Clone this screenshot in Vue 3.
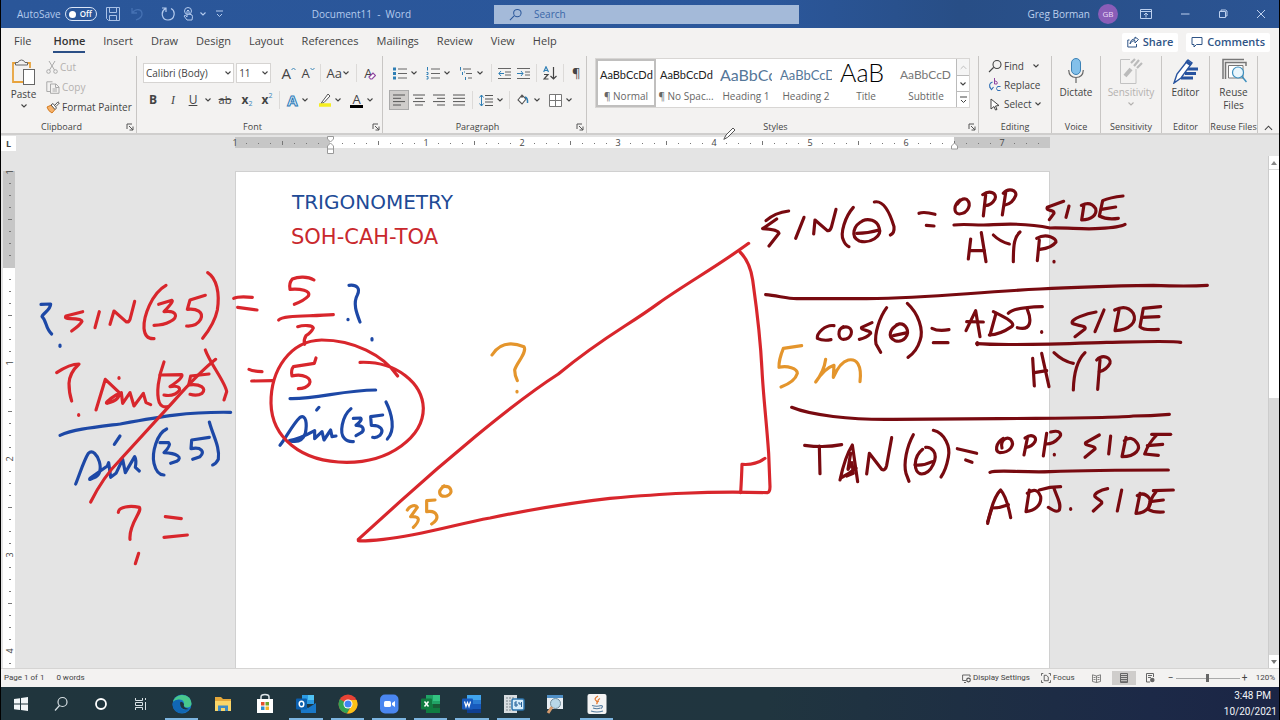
<script setup>
import { h, ref } from 'vue'

const Icon = (p) => h('svg', { width: p.w, height: p.h, class: 'icon', 'aria-hidden': 'true' }, [h('use', { href: '#' + p.n })])
Icon.props = ['n', 'w', 'h']

const tabs = ['File', 'Home', 'Insert', 'Draw', 'Design', 'Layout', 'References', 'Mailings', 'Review', 'View', 'Help']
const search = ref('')
const zoom = ref(50)

const styles = [
  { name: '¶ Normal', sample: 'AaBbCcDd', kind: 'body', on: true },
  { name: '¶ No Spac...', sample: 'AaBbCcDd', kind: 'body' },
  { name: 'Heading 1', sample: 'AaBbCc', kind: 'h1' },
  { name: 'Heading 2', sample: 'AaBbCcD', kind: 'h2' },
  { name: 'Title', sample: 'AaB', kind: 'title' },
  { name: 'Subtitle', sample: 'AaBbCcD', kind: 'sub' }
]

const ticks = (n, zero) => {
  const out = []
  for (let i = 1; i < n; i++) {
    const k = i - zero
    if (k % 8 === 0) { if (k) out.push({ p: i * 12, t: String(Math.abs(k / 8)) }) } else out.push({ p: i * 12, half: k % 4 === 0 })
  }
  return out
}
const hTicks = ticks(68, 8)
const vTicks = ticks(42, 8)

const tasks = [
  { n: 'win', l: 'Start' }, { n: 'tsearch', l: 'Search Windows' }, { n: 'cortana', l: 'Cortana' }, { n: 'taskview', l: 'Task View' },
  { n: 'edge', l: 'Edge', on: true }, { n: 'folder', l: 'File Explorer' }, { n: 'store', l: 'Store' },
  { n: 'outlook', l: 'Outlook', on: true }, { n: 'chrome', l: 'Chrome', on: true }, { n: 'zoomapp', l: 'Zoom', on: true },
  { n: 'excel', l: 'Excel', on: true }, { n: 'word', l: 'Word', on: true }, { n: 'calc', l: 'Calculator', on: true },
  { n: 'snip', l: 'Magnifier' }, { n: 'java', l: 'Java', on: true }
]

const red = '#d8262c', blue = '#1d48a6', dark = '#780a10', orange = '#e4952c'
/* Pen strokes, each layer in thirds of a pixel from its own origin. */
const ink = [
  { x: 20, y: 260, c: blue, d: [
    'M63 133L92 132C92 150 68 160 66 170C80 182 76 205 95 222', 'M120 255L120 259',
    'M568 486C580 530 600 560 595 598Q588 612 578 615',
    'M120 526C160 508 220 502 300 492C420 470 500 455 632 457',
    'M167 672C180 640 192 600 205 580C218 568 232 585 238 605C245 630 238 648 222 653Q205 662 210 655L262 618L266 608L272 652L288 640L308 598L316 638L344 590Q350 600 346 622L358 633',
    'M300 528L283 553',
    'M440 507C410 520 395 580 402 610Q410 645 432 645',
    'M420 548L446 548Q454 556 432 578C470 580 490 592 470 604L452 610',
    'M568 532L515 540L513 566C545 560 555 575 540 590L518 598'
  ] },
  { x: 20, y: 260, c: red, d: [
    'M188 155L138 168Q132 176 150 176Q186 176 186 184Q180 196 155 213', 'M238 155L225 203',
    'M270 193L282 153L318 185Q326 188 330 178L344 124',
    'M438 76C395 100 370 170 372 205Q375 238 402 236',
    'M416 133L456 121Q462 124 432 155C470 150 478 172 450 185Q430 196 402 196',
    'M556 106L510 120L502 148C530 145 552 155 542 178Q530 200 500 198',
    'M563 38C590 55 600 100 592 150C585 185 560 220 548 235',
    'M641 115Q655 108 697 112', 'M653 142L711 150',
    'M110 338C140 318 165 312 177 312C160 328 148 345 147 370Q147 400 155 423', 'M176 464L176 466',
    'M228 450L256 358L298 398Q300 420 262 430Q250 430 290 404L304 398L308 430L330 398L342 438L370 400L378 428L392 434',
    'M297 353L297 355',
    'M432 306C415 350 408 400 418 428Q426 444 441 440',
    'M420 345L485 344Q492 352 450 380C482 375 488 390 465 402Q450 409 432 405',
    'M567 342L512 348L506 375C540 370 562 385 546 400Q532 409 510 403',
    'M556 270C570 310 618 370 620 395L612 420',
    'M587 298C540 335 500 380 460 425L300 600C260 640 235 680 212 726',
    'M295 757C296 740 330 736 358 742C368 755 326 790 330 838', 'M356 880L346 911',
    'M436 770L484 776', 'M432 832L502 825'
  ] },
  { x: 250, y: 170, c: blue, d: [
    'M297 346C320 343 332 355 322 375C308 400 320 430 330 456', 'M294 448L294 449', 'M366 506L366 510',
    'M120 686C200 688 280 660 377 660',
    'M90 826C110 800 130 760 150 742C168 732 172 760 166 790Q155 822 118 812Q150 806 194 782L194 806L216 785L222 810L242 780L246 800L258 798',
    'M207 712L200 720', 'M303 716C275 740 268 790 283 805Q292 816 310 815',
    'M310 745L332 744Q338 750 318 766C342 765 346 782 330 790L318 797',
    'M398 735L362 740L364 766C395 765 402 782 390 796Q378 805 368 802', 'M408 696C425 730 438 780 412 807'
  ] },
  { x: 250, y: 170, c: red, d: [
    'M192 330C170 316 140 322 127 327Q116 340 120 358C150 355 184 362 175 378Q162 392 133 403',
    'M86 450C100 434 180 440 250 434',
    'M143 470C160 465 188 465 190 474Q184 488 168 497Q160 510 164 523',
    'M-3 598Q10 604 36 605', 'M5 633L68 632',
    'M443 618C400 555 310 510 215 510C120 512 62 600 63 700C65 800 150 877 290 877C420 877 520 800 520 715C518 640 440 573 330 577',
    'M198 564L193 580L130 590Q122 600 126 618C160 610 188 625 178 642Q168 656 145 656',
    'M1496 220C1400 290 1310 340 1225 400C1130 470 1060 500 925 612C780 705 560 895 450 995L325 1108',
    'M325 1112Q340 1114 400 1108C520 1095 620 1062 720 1044C870 1013 990 995 1080 985C1230 972 1360 963 1552 968Q1560 966 1560 950L1556 850C1550 760 1540 680 1536 600C1530 480 1515 380 1508 330Q1500 275 1470 246',
    'M1545 865C1525 880 1500 885 1476 883Q1475 920 1472 968'
  ] },
  { x: 250, y: 170, c: orange, d: [
    'M472 1020C480 1006 498 1003 502 1012L482 1040C510 1038 512 1050 490 1072',
    'M555 990L530 992L530 1025C562 1020 572 1045 545 1062',
    'M582 948C560 965 568 982 590 978C612 970 605 945 578 950',
    'M726 555C745 525 775 512 822 530C832 548 800 578 794 600Q794 615 802 632', 'M801 664L801 666'
  ] },
  { x: 700, y: 340, c: orange, d: [
    'M305 17L250 25C242 45 236 65 237 82C262 76 292 85 292 100Q285 125 243 141',
    'M377 58Q372 95 347 126Q375 84 402 76L400 112Q420 66 445 60C470 55 486 75 480 125'
  ] },
  { x: 700, y: 170, c: dark, d: [
    'M266 123Q225 128 198 152', 'M230 147L188 176Q234 178 237 190L207 228', 'M312 142L287 205',
    'M341 192L345 150L382 182Q390 184 394 172L408 118', 'M460 112C435 140 420 190 430 210Q436 226 447 230',
    'M490 152C460 165 450 200 478 213C510 222 548 200 537 172C530 150 505 145 488 152', 'M470 190Q505 190 537 180',
    'M523 96C550 90 570 130 582 170Q584 190 571 195', 'M657 130Q672 124 705 133', 'M679 166L702 168',
    'M197 374C230 376 260 386 290 386L500 386C700 384 800 368 1020 357C1140 350 1220 348 1360 346Q1460 350 1522 346',
    'M402 467C375 463 350 490 352 505Q370 514 393 509', 'M430 470C410 480 415 508 430 508C455 508 462 480 445 472Q436 468 426 474',
    'M516 458L485 472C480 482 514 480 512 490Q500 504 478 508', 'M560 413C540 440 522 490 528 522L542 547',
    'M597 462C570 475 560 500 585 512C610 520 630 495 620 475C612 460 600 460 590 464', 'M580 497L622 488',
    'M622 400C655 430 672 480 660 512Q650 545 624 562', 'M696 475Q715 485 747 479', 'M700 518L744 518'
  ] },
  { x: 940, y: 170, c: dark, d: [
    'M60 90C40 105 40 130 58 132C85 130 96 102 80 88Q66 82 52 102', 'M137 75L130 138', 'M128 74C150 58 172 70 165 87Q155 106 135 107',
    'M197 68L187 135', 'M190 70C205 52 232 60 227 77Q217 102 195 105',
    'M371 94L322 112C316 124 344 118 342 130L328 149', 'M387 108L378 142',
    'M432 104L425 150C455 148 472 135 467 116Q452 92 424 106', 'M549 78Q510 82 488 92L478 138Q500 150 535 145', 'M484 118L527 111',
    'M42 165C80 160 110 168 160 164C230 160 290 165 330 174C380 172 440 180 480 175Q540 172 555 163',
    'M92 207L85 267', 'M124 188L138 275', 'M90 242L133 242', 'M160 195Q180 215 208 222', 'M240 186C224 200 220 220 220 275',
    'M298 210L292 272', 'M290 205C320 188 350 205 348 216Q335 234 300 238', 'M342 274L342 276',
    'M78 482L107 422L120 500', 'M80 455L130 456', 'M168 430L150 495', 'M160 425C190 440 230 458 215 470Q180 494 148 495',
    'M205 430Q220 412 307 410', 'M262 418C275 450 275 484 232 473', 'M305 485L305 487',
    'M468 426C440 430 390 448 397 460C408 468 440 465 435 477L405 500', 'M492 420L465 485',
    'M538 415L525 482C570 480 592 455 580 430Q560 402 524 420', 'M662 410L610 415L600 470Q610 482 655 478', 'M606 442L657 440',
    'M112 518L112 524', 'M110 521C200 528 400 520 500 517C600 515 700 512 722 517',
    'M278 565L283 648', 'M305 550L327 650', 'M283 608L320 602', 'M342 548Q370 575 400 580', 'M435 548Q402 580 400 660',
    'M480 570L473 658', 'M470 570C490 550 515 565 510 580Q500 600 478 605'
  ] },
  { x: 700, y: 340, c: dark, d: [
    'M275 202C330 225 450 240 580 238L900 236C1100 234 1250 234 1300 228Q1350 228 1408 223',
    'M314 316Q375 324 425 314', 'M358 318L360 401', 'M420 420Q435 350 457 315L473 425', 'M422 414Q450 400 468 384', 'M452 340L444 388L456 368L460 400L440 408',
    'M500 402L508 340L545 388Q556 394 560 376L575 293', 'M640 284C620 320 610 370 618 400L627 424',
    'M668 328C640 350 638 398 665 402C695 400 715 352 700 332Q690 320 677 322', 'M645 375Q670 378 697 365',
    'M700 271C735 280 752 320 745 352Q738 390 723 411', 'M772 326L830 340', 'M797 360L816 367'
  ] },
  { x: 940, y: 380, c: dark, d: [
    'M190 175C165 190 165 215 180 218C210 218 226 195 212 178C200 168 180 182 186 204', 'M262 175L252 225', 'M255 174C275 160 292 170 285 185Q276 200 258 202',
    'M320 160L310 228', 'M332 156C362 148 368 163 355 175Q342 192 318 192', 'M343 223L343 225',
    'M478 165L437 188C430 198 468 196 465 207L435 232', 'M512 168L506 222', 'M558 172L546 230C590 230 602 205 592 190Q575 165 553 182',
    'M692 163L635 163', 'M650 165Q625 190 614 222L655 226', 'M622 197L668 193',
    'M150 277C170 268 240 278 330 275C450 270 600 270 685 270',
    'M143 430Q160 350 182 330Q200 350 212 413', 'M143 425L156 384Q180 384 205 374',
    'M268 330L258 395C285 392 305 375 302 350Q290 318 262 340', 'M298 330Q330 320 362 320', 'M342 325C350 350 365 370 358 390Q350 400 325 382', 'M392 386L392 388',
    'M503 326C480 330 460 342 465 350C475 360 488 362 485 370L460 393', 'M545 330L532 393',
    'M600 340L588 400C625 398 638 370 628 355Q612 334 592 347', 'M700 330L640 332', 'M648 335Q628 360 625 388Q640 398 670 396', 'M630 365L670 360'
  ] }
]
</script>

<template>
  <div class="screen">
    <svg class="defs" aria-hidden="true">
      <symbol id="caret" viewBox="0 0 8 6"><path d="M1.5 1.5L4 4L6.500 1.500" fill="none" stroke="currentColor" stroke-width="1.100" /></symbol>
      <symbol id="tri-up" viewBox="0 0 6 4"><path d="M0 4L3 0L6 4Z" fill="#888" /></symbol>
      <symbol id="tri-down" viewBox="0 0 6 4"><path d="M0 0H6L3 4Z" fill="#777" /></symbol>
      <symbol id="save" viewBox="0 0 14 14"><g fill="none" stroke="#a9c1e6"><path d="M.5.5H13.500V13.500H2.500L.5 11.500Z" /><path d="M3.500.5V5.500H10.500V.5M3.500 13V8.500H10.500V13" /></g></symbol>
      <symbol id="undo" viewBox="0 0 15 14"><path d="M2 1V6H7M2 6C6 1 12 2 12 7C12 10 9 12 6 13" fill="none" stroke="#4571b3" stroke-width="1.300" /></symbol>
      <symbol id="redo" viewBox="0 0 14 14"><path d="M1 1H5V5M4.500 1.500C-1 5 1 13 7 13C14 13 15 4 10 1.500" fill="none" stroke="#b4cbee" stroke-width="1.200" /></symbol>
      <symbol id="touch" viewBox="0 0 14 14"><g fill="none" stroke="#b4cbee"><circle cx="6" cy="4" r="3.500" /><path d="M5 10V4Q6 2 7 4V7L10 8Q11 9 10 13H5L2 9Q3 7 5 10" /></g></symbol>
      <symbol id="bar-caret" viewBox="0 0 9 8"><path d="M1 1H8M2 4L4.500 6.500L7 4" fill="none" stroke="currentColor" /></symbol>
      <symbol id="mag" viewBox="0 0 14 14"><path d="M1 13L5.500 8.500M5 5.500A4 4 0 1 0 13 5.500A4 4 0 1 0 5 5.500" fill="none" stroke="currentColor" stroke-width="1.100" /></symbol>
      <symbol id="ribbonbox" viewBox="0 0 12 10"><path d="M.5.5H11.500V9.500H.5ZM.5 2.500H11.500M6 8.500V4M4 6L6 4L8 6" fill="none" stroke="currentColor" /></symbol>
      <symbol id="min" viewBox="0 0 10 10"><path d="M1 5H9.500" stroke="currentColor" /></symbol>
      <symbol id="restore" viewBox="0 0 10 10"><path d="M1.500 2.500H7.500V8.500H1.500ZM3 2V1Q9 .5 9 2V7H8" fill="none" stroke="currentColor" /></symbol>
      <symbol id="close" viewBox="0 0 10 10"><path d="M1 1L9 9M9 1L1 9" stroke="currentColor" /></symbol>
      <symbol id="share" viewBox="0 0 12 12"><path d="M2.500 4H.8V11H9.500V8M3 8Q4 4.500 8 4.500V7L11.500 3.500L8 1V3Q3.500 3 3 8" fill="none" stroke="currentColor" /></symbol>
      <symbol id="comment" viewBox="0 0 12 12"><path d="M1 1.500H11V8.500H5.500L3 11V8.500H1Z" fill="none" stroke="currentColor" /></symbol>
      <symbol id="paste" viewBox="0 0 25 27"><path d="M6 4H2V23H12M16 4H19V9" fill="none" stroke="#e8a33c" stroke-width="1.800" /><path d="M4.500 6V3.500H7Q8 1 10.500 1Q13 1 14 3.500H16.500V6Z" fill="#f3f2f1" stroke="#666" /><rect x="12.500" y="10.500" width="11" height="15" fill="#fff" stroke="#666" /></symbol>
      <symbol id="cut" viewBox="0 0 12 14"><g fill="none" stroke="#aaa"><path d="M3 1L8.500 10M9 1L3.500 10" /><circle cx="2.500" cy="11.500" r="1.800" /><circle cx="9.500" cy="11.500" r="1.800" /></g></symbol>
      <symbol id="copy" viewBox="0 0 14 13"><path d="M4 10.500H.8V.8H6.500M4.500 3H10L13 6V12.300H4.500ZM9.500 3V6.500H13M6.500 8H11M6.500 10H11" fill="none" stroke="#aaa" /></symbol>
      <symbol id="painter" viewBox="0 0 14 13"><path d="M1 6L5.500 4L9 8.500L6 12Q2 10 1 6Z" fill="#f6b26b" stroke="#d47b20" /><path d="M5 4L7 2.500L10.500 7L9 8.500ZM9 4L12 .8L13.300 2L10 5.500" fill="#fff" stroke="#555" /></symbol>
      <symbol id="launch" viewBox="0 0 8 8"><path d="M1 6V1H6M3 3L7 7M7 3.500V7H3.500" fill="none" stroke="#555" /></symbol>
      <symbol id="up" viewBox="0 0 5 4"><path d="M.5 3L2.500 1L4.500 3" fill="none" stroke="#3a86b8" /></symbol>
      <symbol id="down" viewBox="0 0 5 4"><path d="M.5 1L2.500 3L4.500 1" fill="none" stroke="#3a86b8" /></symbol>
      <symbol id="eraser" viewBox="0 0 8 8"><path d="M1 5L5 1L7.500 3.500L4 7H2.500Z" fill="#fff" stroke="#8e44a0" stroke-width="1.200" /></symbol>
      <symbol id="pen" viewBox="0 0 12 14"><path d="M3 9L9 1L11 3L5 9.500L2 10.500Z" fill="#fff" stroke="#555" /><path d="M0 12H12" stroke="#f5ee20" stroke-width="3.500" /></symbol>
      <symbol id="bullets" viewBox="0 0 14 13"><path d="M5 2H14M5 6.500H14M5 11H14" stroke="#666" /><path d="M0 2H3M0 6.500H3M0 11H3" stroke="#2f7fb5" stroke-width="3" /></symbol>
      <symbol id="numbers" viewBox="0 0 14 13"><path d="M5 2H14M5 6.500H14M5 11H14" stroke="#666" /><path d="M1.500 0V3.500M.5 5.500H2V7.500H.5M.5 9.500H2V12H.5" fill="none" stroke="#2f7fb5" /></symbol>
      <symbol id="levels" viewBox="0 0 14 13"><path d="M4 2H12M7 6.500H13M9 11H13" stroke="#666" /><path d="M1.500 0V3.500M3.500 5V8M5 5H6M6.500 10V13" fill="none" stroke="#2f7fb5" /></symbol>
      <symbol id="outdent" viewBox="0 0 13 11"><path d="M0 .5H13M7 4H13M7 7H13M0 10.500H13" stroke="#666" /><path d="M6 5.500H1M3 3L.8 5.500L3 8" fill="none" stroke="#2f7fb5" /></symbol>
      <symbol id="indent" viewBox="0 0 13 11"><path d="M0 .5H13M8 4H13M8 7H13M0 10.500H13" stroke="#666" /><path d="M0 5.500H6M4 3L6 5.500L4 8" fill="none" stroke="#2f7fb5" /></symbol>
      <symbol id="sortaz" viewBox="0 0 14 14"><path d="M.7 6L3 0.800L5.500 6M1.500 4.500H4.700" fill="none" stroke="#2f7fb5" stroke-width="1.200" /><path d="M1 8.500H5L1 13H5.500M10.500 1V13M7.500 10L10.500 13L13.500 10" fill="none" stroke="#444" stroke-width="1.200" /></symbol>
      <symbol id="alignl" viewBox="0 0 12 12"><path d="M0 1H12M0 4.300H8M0 7.600H12M0 11H8" stroke="#555" /></symbol>
      <symbol id="alignc" viewBox="0 0 12 12"><path d="M0 1H12M2 4.300H10M0 7.600H12M2 11H10" stroke="#555" /></symbol>
      <symbol id="alignr" viewBox="0 0 12 12"><path d="M0 1H12M4 4.300H12M0 7.600H12M4 11H12" stroke="#555" /></symbol>
      <symbol id="alignj" viewBox="0 0 12 12"><path d="M0 1H12M0 4.300H12M0 7.600H12M0 11H12" stroke="#555" /></symbol>
      <symbol id="spacing" viewBox="0 0 14 13"><path d="M6 1.500H14M6 5H14M6 8H14M6 11.500H14" stroke="#555" /><path d="M2.500 1V12M.5 3.500L2.500 1L4.500 3.500M.5 9.500L2.500 12L4.500 9.500" fill="none" stroke="#2f7fb5" /></symbol>
      <symbol id="bucket" viewBox="0 0 13 12"><path d="M5 1L1 6L5 10L9 5ZM5 1V4" fill="#fff" stroke="#555" stroke-width="1.100" /><path d="M8 3Q11 4 10.500 9" fill="none" stroke="#2f7fb5" stroke-width="1.500" /></symbol>
      <symbol id="borders" viewBox="0 0 13 13"><path d="M.5.5H12.500V12.500H.5ZM6.500 0V13M0 6.500H13" fill="#fff" stroke="#777" /></symbol>
      <symbol id="replace" viewBox="0 0 13 14"><path d="M2.500 11Q-1 6 4 4M1 9L3 11.500L5 9" fill="none" stroke="#2f6eb5" stroke-width="1.100" /><path d="M6 0V6H8.500Q9.500 3 6 3" fill="none" stroke="#8e44a0" /><path d="M12 8.500Q8 7.500 8 10.500Q8 13.500 12 12.500" fill="none" stroke="#2f6eb5" /></symbol>
      <symbol id="arrow" viewBox="0 0 10 13"><path d="M1 1V11L4 8.500L5.500 12L7 11.500L5.500 8L9 7.500Z" fill="#fff" stroke="#444" /></symbol>
      <symbol id="mic" viewBox="0 0 16 26"><rect x="3.500" y=".5" width="9" height="16" rx="4.500" fill="#83c0ea" stroke="#3c82b6" /><path d="M.7 12Q1 19.500 8 19.500Q15 19.500 15.300 12M8 19.500V25" fill="none" stroke="#666" stroke-width="1.200" /></symbol>
      <symbol id="sens" viewBox="0 0 25 26"><path d="M17 11V25.500H1.500V1.500H11" fill="none" stroke="#c2c2c2" /><path d="M6 18L12 11" stroke="#bbb" stroke-width="4" /><path d="M12 5L16 1M15 8L20 2M18 10L23 5" stroke="#bbb" stroke-width="2.200" /></symbol>
      <symbol id="editor" viewBox="0 0 26 26"><path d="M13 11H25M12 15.500H23M8 20H20" stroke="#27539f" stroke-width="2.800" /><path d="M1 25L4 16L15 2L19 5L8 20Z" fill="#fff" stroke="#27539f" stroke-width="1.400" /><path d="M14 2L19 5.500L17 8L12 4.500Z" fill="#27539f" /></symbol>
      <symbol id="reuse" viewBox="0 0 26 26"><path d="M2 21V1.500H23M4.500 21V4.500H25V8" fill="none" stroke="#777" stroke-width="1.500" /><path d="M7.500 7.500H22V20H7.500Z" fill="#fff" stroke="#777" /><circle cx="17" cy="14.500" r="5.500" fill="#eaf6fc" stroke="#3c8fbe" stroke-width="1.200" /><path d="M21 18.500L25.500 24" stroke="#3c8fbe" stroke-width="1.500" /></symbol>
      <symbol id="collapse" viewBox="0 0 10 6"><path d="M1 5L5 1L9 5" fill="none" stroke="#444" stroke-width="1.200" /></symbol>
      <symbol id="display" viewBox="0 0 9 9"><path d="M8 3V1H.6V6.500H4M2 8.500H4" fill="none" stroke="#666" /><circle cx="6.500" cy="6" r="1.800" fill="none" stroke="#555" stroke-width="1.200" /></symbol>
      <symbol id="focus" viewBox="0 0 11 11"><path d="M.5 3V.5H2.500M8.500.5H10.500V3M.5 8V10.500H2.500M8.500 10.500H10.500V8M3.500 2.500H6L8 4.500V8.500H3.500Z" fill="none" stroke="#555" /></symbol>
      <symbol id="read" viewBox="0 0 9 9"><path d="M.5.800L4.500 2L8.500.800V7.500L4.500 8.500L.5 7.500ZM4.500 2V8.500M1.500 3.500H3.500M5.500 3.500H7.500M1.500 5.500H3.500M5.500 5.500H7.500" fill="none" stroke="#666" stroke-width=".8" /></symbol>
      <symbol id="print" viewBox="0 0 8 10"><path d="M.5.5H7.500V9.500H.5ZM1 2.500H7M1 4.500H7M1 6.500H7M1 8.300H7" fill="none" stroke="#666" /></symbol>
      <symbol id="web" viewBox="0 0 9 10"><path d="M7.500 4V.5H.5V9H4M2 2.500H6M2 4.500H5" fill="none" stroke="#666" /><circle cx="6.300" cy="7" r="2.300" fill="#666" /></symbol>
      <symbol id="win" viewBox="0 0 22 22"><path d="M4 6L10 5.200V10.500H4ZM11 5L18 4V10.500H11ZM4 11.500H10V17L4 16.200ZM11 11.500H18V18L11 17Z" fill="#f2f6f8" /></symbol>
      <symbol id="tsearch" viewBox="0 0 22 22"><circle cx="12.500" cy="9" r="4.500" fill="none" stroke="#d8e0e4" stroke-width="1.200" /><path d="M9.500 12.500L5 17.500" stroke="#d8e0e4" stroke-width="1.200" /></symbol>
      <symbol id="cortana" viewBox="0 0 22 22"><circle cx="11" cy="11" r="5" fill="none" stroke="#fff" stroke-width="1.800" /></symbol>
      <symbol id="taskview" viewBox="0 0 22 22"><path d="M5.500 5V7.500H12.500V5M5.500 17V14.500H12.500V17M5.500 9.500H12.500V12.500H5.500ZM15.500 5V7M15.500 9V17" fill="none" stroke="#d8e0e4" /></symbol>
      <symbol id="edge" viewBox="0 0 22 22"><circle cx="11" cy="11" r="9.500" fill="#1674c9" /><path d="M2 9C4 0 20-1 20.500 11C20 16 12 15 13 12C14 6 7 5 2 9Z" fill="#48c78d" /><path d="M2 9C7 5 11 7 9 11C8 16 13 18 18 16C14 22 3 22 1.500 12Z" fill="#1167b4" /><path d="M9 10Q10 7 13 11Q12 14 15 15L18 16Q9 18 9 10Z" fill="#20353d" /></symbol>
      <symbol id="folder" viewBox="0 0 22 22"><path d="M3 4H9L11 6H19V18H3Z" fill="#e5a83b" /><path d="M3 8H19V18H3Z" fill="#fad568" /><path d="M6 18V12.500H16V18H13V15H9V18Z" fill="#3e8bc4" /></symbol>
      <symbol id="store" viewBox="0 0 22 22"><path d="M7 7V4Q7 1.500 11 1.500Q15 1.500 15 4V7" fill="none" stroke="#dfe6ea" stroke-width="1.500" /><path d="M3 6H19V20H3Z" fill="#fff" /><path d="M7 9H10.500V12.500H7Z" fill="#e34f2e" /><path d="M11.500 9H15V12.500H11.500Z" fill="#6ea72d" /><path d="M7 13.500H10.500V17H7Z" fill="#2c8ed0" /><path d="M11.500 13.500H15V17H11.500Z" fill="#f2b52b" /></symbol>
      <symbol id="outlook" viewBox="0 0 22 22"><path d="M7 2H19V11H7Z" fill="#2c9be3" /><path d="M13 2H19V7H13Z" fill="#50c3f4" /><path d="M5 10L13 15L21 10V20H6Z" fill="#1978c8" /><rect x="1" y="5.500" width="11" height="11" rx="1" fill="#0b5fae" /><ellipse cx="6.500" cy="11" rx="2.300" ry="2.800" fill="none" stroke="#fff" stroke-width="1.500" /></symbol>
      <symbol id="chrome" viewBox="0 0 22 22"><circle cx="11" cy="11" r="9.500" fill="#e94335" /><path d="M11 11L2.800 6.200A9.500 9.500 0 0 0 10 20.400L14 13Z" fill="#33a353" /><path d="M11 7H19.600A9.500 9.500 0 0 1 10 20.500L15 12Z" fill="#fbc116" /><circle cx="11" cy="11" r="4.500" fill="#fff" /><circle cx="11" cy="11" r="3.500" fill="#4285f4" /></symbol>
      <symbol id="zoomapp" viewBox="0 0 22 22"><rect x="2" y="1.500" width="18.500" height="19" rx="5" fill="#4a86f0" /><rect x="6" y="8" width="7" height="6" rx="1.500" fill="#fff" /><path d="M14 10L17 8V14L14 12Z" fill="#fff" /></symbol>
      <symbol id="excel" viewBox="0 0 22 22"><path d="M6 2H20V20H6Z" fill="#21a366" /><path d="M13 2H20V8H13Z" fill="#33c481" /><path d="M6 11H20V20H6Z" fill="#107c41" /><path d="M13 11H20V15H13Z" fill="#185c37" /><rect x="1" y="5.500" width="11" height="11" rx="1" fill="#107c41" /><path d="M4.500 8.500L8.500 13.500M8.500 8.500L4.500 13.500" stroke="#fff" stroke-width="1.500" /></symbol>
      <symbol id="word" viewBox="0 0 22 22"><path d="M6 2H20V20H6Z" fill="#2b7cd3" /><path d="M6 2H20V7H6Z" fill="#41a5ee" /><path d="M6 11H20V20H6Z" fill="#185abd" /><path d="M6 16H20V20H6Z" fill="#103f91" /><rect x="1" y="5.500" width="11" height="11" rx="1" fill="#185abd" /><path d="M3.500 8.500L5 13.500L6.500 9.500L8 13.500L9.500 8.500" fill="none" stroke="#fff" stroke-width="1.200" /></symbol>
      <symbol id="calc" viewBox="0 0 22 22"><rect x="1" y="2" width="13" height="18" fill="#d8dde0" /><path d="M3 5H12M3 8H12M3 11H12M3 14H12M3 17H12" stroke="#7a858b" stroke-dasharray="2 1" /><rect x="9" y="6" width="12" height="11" rx="1.500" fill="#d8edfa" stroke="#2e76ae" stroke-width="1.500" /><path d="M14 9H12V13H14V11H12M16 9V11H19M18.500 9V14" fill="none" stroke="#225e96" /></symbol>
      <symbol id="snip" viewBox="0 0 22 22"><rect x="3" y="2" width="16" height="14" fill="#e7eef3" /><path d="M3 2H19V5H3Z" fill="#4f8fc5" /><circle cx="11.500" cy="10.500" r="5" fill="#b8d8e8" stroke="#738d9b" /><path d="M8 14L4 20" stroke="#d59b6e" stroke-width="3" /></symbol>
      <symbol id="java" viewBox="0 0 22 22"><rect x="1.500" y="1" width="19" height="20" rx="2" fill="#f4f4f4" /><path d="M12 3Q7 6 10.500 8Q12 9.500 10.500 11M14 5.500Q11 7 12.500 9" fill="none" stroke="#e2762b" stroke-width="1.200" /><path d="M6 12.500Q11 14 15 12.500M7 15Q11 16.500 14.500 15M5 18Q11 20 17 18M15 12.500Q18 13 15 15.500" fill="none" stroke="#527a9e" stroke-width="1.100" /></symbol>
    </svg>

    <header class="titlebar">
      <div class="quick">
        <label class="autosave">AutoSave <span class="switch"><input type="checkbox" role="switch" aria-label="AutoSave"><i></i>Off</span></label>
        <button aria-label="Save"><Icon n="save" w="14" h="14" /></button>
        <button class="undo" aria-label="Undo"><Icon n="undo" w="15" h="14" /></button>
        <button aria-label="Redo"><Icon n="redo" w="14" h="14" /></button>
        <button class="touch" aria-label="Touch mode"><Icon n="touch" w="14" h="14" /><Icon n="caret" w="8" h="6" /></button>
        <button aria-label="Customize toolbar"><Icon n="bar-caret" w="9" h="8" /></button>
        <span class="doc">Document11&nbsp; -&nbsp; Word</span>
      </div>
      <label class="search"><Icon n="mag" w="13" h="13" /><input v-model="search" type="text" placeholder="Search" aria-label="Search"></label>
      <div class="winctl">
        <span class="user">Greg Borman</span><span class="avatar">GB</span>
        <button aria-label="Ribbon display options"><Icon n="ribbonbox" w="12" h="10" /></button>
        <button aria-label="Minimize"><Icon n="min" w="10" h="10" /></button>
        <button aria-label="Restore"><Icon n="restore" w="10" h="10" /></button>
        <button aria-label="Close"><Icon n="close" w="10" h="10" /></button>
      </div>
    </header>

    <div class="tabrow">
      <nav class="tabs"><a v-for="t in tabs" :key="t" href="#" :class="{ on: t === 'Home' }">{{ t }}</a></nav>
      <button class="pill"><Icon n="share" w="12" h="12" />Share</button>
      <button class="pill"><Icon n="comment" w="12" h="12" />Comments</button>
    </div>

    <div class="ribbon">
      <section class="group">
        <div class="body clip">
          <button class="big"><Icon n="paste" w="25" h="27" /><span>Paste</span><Icon n="caret" w="8" h="6" /></button>
          <div class="list">
            <button class="off"><Icon n="cut" w="12" h="14" />Cut</button>
            <button class="off"><Icon n="copy" w="14" h="13" />Copy</button>
            <button><Icon n="painter" w="14" h="13" />Format Painter</button>
          </div>
        </div>
        <footer class="more">Clipboard<button class="launch" aria-label="Clipboard settings"><Icon n="launch" w="8" h="8" /></button></footer>
      </section>

      <section class="group">
        <div class="body rows">
          <div class="row">
            <span class="combo family"><select aria-label="Font"><option>Calibri (Body)</option></select><Icon n="caret" w="8" h="6" /></span>
            <span class="combo size"><select aria-label="Font size"><option>11</option></select><Icon n="caret" w="8" h="6" /></span>
            <button class="b20 lg" aria-label="Grow font">A<Icon n="up" w="5" h="4" /></button>
            <button class="b20 md" aria-label="Shrink font">A<Icon n="down" w="5" h="4" /></button>
            <i class="sep"></i>
            <button class="b33 md">Aa<Icon n="caret" w="8" h="6" /></button>
            <i class="sep"></i>
            <button class="b24 md clear" aria-label="Clear formatting">A<Icon n="eraser" w="8" h="8" /></button>
          </div>
          <div class="row">
            <button class="b20"><b>B</b></button>
            <button class="b20 serif"><em>I</em></button>
            <button class="b20"><u>U</u></button>
            <button class="b10" aria-label="Underline style"><Icon n="caret" w="8" h="6" /></button>
            <button class="b24"><s>ab</s></button>
            <button class="b20"><b>x</b><sub>2</sub></button>
            <button class="b20"><b>x</b><sup>2</sup></button>
            <i class="sep"></i>
            <button class="b33 fx"><b>A</b><Icon n="caret" w="8" h="6" /></button>
            <button class="b33" aria-label="Highlight"><Icon n="pen" w="12" h="14" /><Icon n="caret" w="8" h="6" /></button>
            <button class="b33 fc"><span>A</span><Icon n="caret" w="8" h="6" /></button>
          </div>
        </div>
        <footer class="more">Font<button class="launch" aria-label="Font settings"><Icon n="launch" w="8" h="8" /></button></footer>
      </section>

      <section class="group">
        <div class="body rows para">
          <div class="row">
            <button class="b34" aria-label="Bullets"><Icon n="bullets" w="14" h="13" /><Icon n="caret" w="8" h="6" /></button>
            <button class="b34" aria-label="Numbering"><Icon n="numbers" w="14" h="13" /><Icon n="caret" w="8" h="6" /></button>
            <button class="b34" aria-label="Multilevel list"><Icon n="levels" w="14" h="13" /><Icon n="caret" w="8" h="6" /></button>
            <i class="sep"></i>
            <button class="b20" aria-label="Decrease indent"><Icon n="outdent" w="13" h="11" /></button>
            <button class="b20" aria-label="Increase indent"><Icon n="indent" w="13" h="11" /></button>
            <i class="sep"></i>
            <button class="b20" aria-label="Sort"><Icon n="sortaz" w="14" h="14" /></button>
            <i class="sep"></i>
            <button class="b20 md">¶</button>
          </div>
          <div class="row">
            <button class="b20 sel" aria-label="Align left"><Icon n="alignl" w="12" h="12" /></button>
            <button class="b20" aria-label="Center"><Icon n="alignc" w="12" h="12" /></button>
            <button class="b20" aria-label="Align right"><Icon n="alignr" w="12" h="12" /></button>
            <button class="b20" aria-label="Justify"><Icon n="alignj" w="12" h="12" /></button>
            <i class="sep"></i>
            <button class="b30" aria-label="Line spacing"><Icon n="spacing" w="14" h="13" /><Icon n="caret" w="8" h="6" /></button>
            <i class="sep"></i>
            <button class="b33" aria-label="Shading"><Icon n="bucket" w="13" h="12" /><Icon n="caret" w="8" h="6" /></button>
            <button class="b33" aria-label="Borders"><Icon n="borders" w="13" h="13" /><Icon n="caret" w="8" h="6" /></button>
          </div>
        </div>
        <footer class="more">Paragraph<button class="launch" aria-label="Paragraph settings"><Icon n="launch" w="8" h="8" /></button></footer>
      </section>

      <section class="group">
        <div class="body gallery">
          <button v-for="s in styles" :key="s.name" class="style" :class="[s.kind, { on: s.on }]"><span class="sample">{{ s.sample }}</span><span>{{ s.name }}</span></button>
          <div class="scroll">
            <button class="dim" aria-label="Previous styles"><Icon n="collapse" w="7" h="5" /></button>
            <button aria-label="Next styles"><Icon n="caret" w="8" h="6" /></button>
            <button aria-label="More styles"><Icon n="bar-caret" w="9" h="8" /></button>
          </div>
        </div>
        <footer class="more">Styles<button class="launch" aria-label="Styles pane"><Icon n="launch" w="8" h="8" /></button></footer>
      </section>

      <section class="group">
        <div class="body list edit">
          <button><Icon n="mag" w="14" h="14" />Find<Icon class="gap" n="caret" w="8" h="6" /></button>
          <button><Icon n="replace" w="14" h="14" />Replace</button>
          <button><Icon n="arrow" w="14" h="13" />Select<Icon n="caret" w="8" h="6" /></button>
        </div>
        <footer>Editing</footer>
      </section>
      <section class="group"><div class="body"><button class="big"><Icon n="mic" w="16" h="26" /><span>Dictate</span></button></div><footer>Voice</footer></section>
      <section class="group"><div class="body"><button class="big off"><Icon n="sens" w="25" h="26" /><span>Sensitivity</span><Icon n="caret" w="8" h="6" /></button></div><footer>Sensitivity</footer></section>
      <section class="group"><div class="body"><button class="big"><Icon n="editor" w="26" h="26" /><span>Editor</span></button></div><footer>Editor</footer></section>
      <section class="group"><div class="body"><button class="big"><Icon n="reuse" w="26" h="26" /><span>Reuse<br>Files</span></button></div><footer>Reuse Files</footer></section>
      <button class="collapse" aria-label="Collapse ribbon"><Icon n="collapse" w="9" h="6" /></button>
    </div>

    <div class="rulerrow">
      <span class="corner">L</span>
      <svg class="hruler" width="815" height="18" aria-label="Horizontal ruler">
        <rect y="1" width="815" height="11" fill="#c6c6c6" /><rect x="95" y="1" width="624" height="11" fill="#fff" />
        <template v-for="t in hTicks" :key="t.p">
          <text v-if="t.t" :x="t.p - 1" y="10">{{ t.t }}</text>
          <rect v-else :x="t.p - 1" :y="t.half ? 5 : 7" width="1" :height="t.half ? 4 : 1" fill="#777" />
        </template>
        <text x="0" y="10">1</text>
        <path d="M92.500.5H98.500V3L95.500 6L92.500 3ZM92.500 13V10L95.500 7L98.500 10V17.500H92.500ZM92.500 13H98.500M716.500 13V10L719.500 7L722.500 10V13Z" fill="#fff" stroke="#999" />
      </svg>
    </div>

    <main class="work">
      <svg class="vruler" width="15" height="497" aria-label="Vertical ruler">
        <rect x="2" width="12" height="97" fill="#c6c6c6" /><rect x="2" y="97" width="12" height="400" fill="#fff" />
        <template v-for="t in vTicks" :key="t.p">
          <g v-if="t.t" :transform="`translate(12 ${t.p})rotate(-90)`"><text>{{ t.t }}</text></g>
          <rect v-else :x="t.half ? 7 : 8" :y="t.p" :width="t.half ? 4 : 2" height="1" fill="#777" />
        </template>
        <g transform="translate(12 1)rotate(-90)"><text>1</text></g>
      </svg>
      <div class="canvas">
        <article class="page"><p class="first">TRIGONOMETRY</p><p class="second">SOH-CAH-TOA</p></article>
      </div>
      <div class="vscroll"><button aria-label="Scroll up"><Icon n="tri-up" w="6" h="4" /></button><span class="thumb"></span><button aria-label="Scroll down"><Icon n="tri-down" w="6" h="4" /></button></div>
    </main>

    <footer class="status">
      <span>Page 1 of 1</span><span class="words">0 words</span>
      <button class="right"><Icon n="display" w="9" h="9" />Display Settings</button>
      <button class="foc"><Icon n="focus" w="10" h="10" />Focus</button>
      <button class="view" aria-label="Read mode"><Icon n="read" w="9" h="9" /></button>
      <button class="view on" aria-label="Print layout"><Icon n="print" w="8" h="10" /></button>
      <button class="view" aria-label="Web layout"><Icon n="web" w="9" h="10" /></button>
      <button class="step">−</button><input v-model="zoom" type="range" aria-label="Zoom"><button class="step">+</button>
      <span class="pct">120%</span>
    </footer>

    <footer class="taskbar">
      <button v-for="t in tasks" :key="t.n" :class="{ on: t.on }" :aria-label="t.l"><Icon :n="t.n" w="22" h="22" /></button>
      <div class="clock"><span>3:48 PM</span><span>10/20/2021</span></div>
    </footer>

    <svg class="ink" width="1280" height="720" viewBox="0 0 1280 720" role="img" aria-label="Pen drawing">
      <g v-for="(g, i) in ink" :key="i" :transform="`translate(${g.x} ${g.y}) scale(.33333)`" :stroke="g.c">
        <path v-for="(d, j) in g.d" :key="j" :d="d" />
      </g>
      <path class="cursor" d="M724 139L726 135L733 128L735 130L728 137Z" />
    </svg>
  </div>
</template>

<style>
body { margin: 0; overflow: hidden; }
</style>
<style scoped>
.screen { position: relative; display: flex; flex-direction: column; height: 100vh; box-sizing: border-box; border: solid #000; border-width: 0 1px; background: #e4e4e4; color: #444; font: 11px/14px "Open Sans", "Noto Sans", sans-serif; overflow: hidden; }
.defs { position: absolute; width: 0; height: 0; }
.icon { flex: none; display: block; }
button { border: 0; padding: 0; margin: 0; background: none; font: inherit; color: inherit; display: flex; align-items: center; justify-content: center; white-space: nowrap; }
input, select { font: inherit; color: inherit; }

.titlebar { height: 28px; flex: none; display: grid; grid-template-columns: 493px minmax(100px, 305px) 1fr; align-items: center; background: linear-gradient(90deg, #2a5699, #2b579b 60%, #284e86 75%, #2b5493); color: #b4cbee; font-size: 10px; }
.quick { display: flex; align-items: center; padding-left: 16px; }
.autosave { display: flex; align-items: center; gap: 4px; margin-right: 9px; }
.switch { display: flex; align-items: center; gap: 8px; width: 30px; height: 12px; border: 1px solid #dbe6f8; border-radius: 8px; color: #fff; font-size: 8px; font-weight: 600; }
.switch input { position: absolute; opacity: 0; width: 30px; height: 12px; margin: 0; }
.switch i { width: 7px; height: 7px; margin-left: 3px; margin-right: -4px; border-radius: 50%; background: #fff; }
.undo { margin: 0 16px 0 10px; }
.touch { gap: 3px; margin: 0 8px 0 7px; }
.doc { margin-left: auto; margin-right: 83px; }
.search { display: flex; align-items: center; gap: 12px; height: 19px; padding-left: 15px; background: #a4bad9; color: #2b579a; }
.search input { flex: 1; min-width: 0; border: 0; padding: 0; background: none; outline: 0; }
.search input::placeholder { color: #3a66a8; opacity: 1; }
.winctl { display: flex; align-items: center; justify-content: flex-end; gap: 28px; padding-right: 13px; color: #bdd0ee; }
.user { margin-right: -20px; }
.avatar { width: 20px; height: 20px; margin-right: -6px; border-radius: 50%; background: #8a5db8; color: #eadcf7; font-size: 8px; line-height: 20px; text-align: center; }

.tabrow { height: 28px; flex: none; display: flex; align-items: center; gap: 8px; padding-right: 9px; background: #f3f2f1; }
.tabs { display: flex; gap: 18px; flex: 1; padding-left: 13px; }
.tabs a { color: #444; text-decoration: none; line-height: 20px; border-bottom: 2px solid transparent; }
.tabs a:first-child { margin-right: 4px; }
.tabs .on { font-weight: 600; color: #333; border-color: #2b4f86; }
.pill { height: 19px; padding: 0 5px; gap: 4px; background: #fff; border-radius: 2px; color: #2f5486; font-weight: 600; }

.ribbon { height: 77px; flex: none; display: grid; grid-template-columns: 136px 246px 204px minmax(380px, 1fr) 73px 49px 61px 48px 48px 21px; background: #f3f2f1; border-bottom: 2px solid #cfcecd; font-size: 10px; }
.group { display: flex; flex-direction: column; min-width: 0; border-right: 1px solid #c8c6c4; }
.body { flex: 1; min-width: 0; }
.group footer { position: relative; height: 13px; font-size: 9px; line-height: 13px; text-align: center; white-space: nowrap; }
.group .more { padding-right: 14px; }
.launch { position: absolute; right: 2px; top: 3px; }
.clip { display: flex; }
.big { flex-direction: column; justify-content: flex-start; width: 100%; padding-top: 2px; line-height: 13px; gap: 2px; }
.clip .big { width: 45px; padding-top: 3px; }
.off { color: #b3b1af; }
.list { display: flex; flex-direction: column; gap: 6px; padding-top: 4px; }
.list button { gap: 2px; justify-content: flex-start; height: 14px; }
.edit { gap: 5px; padding: 3px 0 0 9px; }
.edit .gap { margin-left: 6px; }
.rows { display: flex; flex-direction: column; gap: 7px; padding: 7px 0 0 6px; }
.row { display: flex; align-items: center; height: 20px; font-size: 12px; }
.combo { position: relative; height: 18px; border: 1px solid #d6d4d2; background: #fff; font-size: 10px; margin-right: 2px; }
.combo select { appearance: none; border: 0; background: none; width: 100%; height: 18px; padding: 0 0 0 2px; }
.combo .icon { position: absolute; right: 1px; top: 6px; }
.family { width: 92px; }
.size { width: 34px; }
.row button { height: 20px; gap: 3px; }
.b10 { width: 10px; }
.b20 { width: 20px; }
.b24 { width: 24px; }
.b30 { width: 30px; }
.b33 { width: 32px; }
.b34 { width: 34px; }
.row .lg { font-size: 15px; gap: 0; margin-left: 6px; }
.row .md { font-size: 13px; gap: 0; }
.row .lg .icon, .row .b20.md .icon { margin-bottom: 8px; }
.row .clear .icon { margin: 6px 0 0 -4px; }
.sep { width: 1px; height: 18px; margin: 0 2px; background: #dcdad8; }
.para .sep { margin: 0 3px; }
.serif { font-family: "Liberation Serif", serif; }
.row sub, .row sup { font-size: 7px; color: #3a86b8; margin-left: -3px; line-height: 8px; }
.row sub { margin-top: 8px; }
.row sup { margin-bottom: 8px; }
.row s { font-size: 11px; }
.fx b { color: #e6f2fb; font-size: 15px; -webkit-text-stroke: 1px #2b7ab8; }
.fc span { border-bottom: 3px solid #000; font-size: 13px; line-height: 12px; padding: 0 2px; }
.sel { background: #cfcdcb; box-shadow: inset 0 0 0 1px #aaa; }

.gallery { display: flex; flex: none; height: 50px; margin: 2px 8px 3px; background: #fff; border: 1px solid #d8d6d4; box-sizing: border-box; }
.group .gallery + footer { margin-top: auto; }
.style { flex: 1 1 0; min-width: 0; flex-direction: column; justify-content: flex-start; color: #666; }
.style span { line-height: 14px; }
.style.on { box-shadow: inset 0 0 0 2px #c0bfbe; }
.style .sample { width: 52px; height: 26px; line-height: 32px; margin-bottom: 4px; text-align: left; color: #222; font-family: Lato, sans-serif; font-size: 11px; }
.style.h1 .sample { overflow: hidden; color: #557799; font-size: 16px; }
.style.h2 .sample { overflow: hidden; color: #557799; font-size: 13px; }
.style.title .sample { font-size: 25px; line-height: 26px; font-weight: 300; color: #000; }
.style.sub .sample { color: #777; font-size: 12px; }
.scroll { width: 12px; display: grid; grid-template-rows: 1fr 1fr 1fr; border-left: 1px solid #bbb; }
.scroll button + button { border-top: 1px solid #bbb; }
.dim { opacity: .4; background: #e8e8e8; }
.collapse { align-self: end; margin-bottom: 2px; }

.rulerrow { height: 36px; flex: none; display: flex; padding: 1px 11px 0 0; box-sizing: border-box; }
.corner { width: 15px; height: 15px; margin-right: 1px; background: #fff; font-size: 9px; font-weight: 700; line-height: 15px; text-align: center; }
.hruler { margin: 0 auto; flex: none; overflow: visible; }
.hruler text, .vruler text { font: 9px "Open Sans", sans-serif; fill: #444; text-anchor: middle; }

.work { flex: 1; min-height: 0; display: flex; }
.vruler { flex: none; margin-right: 1px; overflow: visible; }
.canvas { flex: 1; min-width: 0; display: flex; justify-content: center; }
.page { width: 815px; flex: none; box-sizing: border-box; padding: 18px 56px; background: #fff; border: solid #d0d0d0; border-width: 1px 1px 0; font: 20px/24px "DejaVu Sans", sans-serif; }
.page p { margin: 0 0 11px; }
.first { color: #204a96; }
.second { color: #c9282d; font-size: 21px; }
.page .second { margin-left: -1px; }
.vscroll { width: 10px; display: flex; flex-direction: column; margin-top: -15px; background: #d9d9d9; border-left: 1px solid #ccc; }
.vscroll button { height: 13px; flex: none; background: #fff; }
.thumb { height: 228px; background: #fff; margin: 1px 0 auto; }

.status { height: 18px; flex: none; display: flex; align-items: center; padding: 0 3px; background: #f3f2f1; border-top: 1px solid #d5d4d3; font: 8px/12px Roboto, sans-serif; }
.words { margin-left: 12px; }
.status button { gap: 2px; }
.right { margin-left: auto; }
.foc { margin: 0 10px 0 11px; }
.status .view { width: 24px; height: 14px; margin-right: 3px; }
.status .view.on { background: #cfcdcb; }
.status .step { width: 10px; font-size: 10px; }
.status input { appearance: none; width: 64px; height: 10px; margin: 0; background: linear-gradient(#aaa, #aaa) center / 100% 1px no-repeat; }
.status input::-webkit-slider-thumb { appearance: none; width: 3px; height: 8px; background: #666; }
.pct { margin-left: 6px; margin-right: 1px; }

.taskbar { height: 33px; flex: none; display: grid; grid-template-columns: repeat(4, 40px) repeat(5, 41px 42px) 41px 1fr; background: linear-gradient(90deg, #20353d, #20353f 60%, #1c2947 90%, #1b2545); }
.taskbar button { box-sizing: border-box; margin: 0 4px; }
.taskbar .on { background: linear-gradient(#7db5e0, #7db5e0) bottom / 100% 2px no-repeat; }
.clock { display: flex; flex-direction: column; align-items: flex-end; padding: 1px 2px 0 0; color: #f1f4f8; font: 10px/16px Roboto, sans-serif; }
.clock span:first-child { margin-right: 6px; }

.ink { position: absolute; left: -1px; top: 0; pointer-events: none; fill: none; stroke-width: 9.500; stroke-linecap: round; stroke-linejoin: round; }
.ink .cursor { stroke: #555; stroke-width: 1; fill: #fff; }
</style>
